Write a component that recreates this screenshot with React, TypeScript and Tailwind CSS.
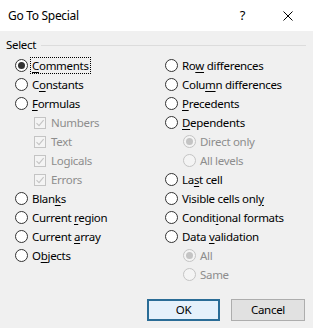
import React from 'react';

type Item = {
  label: string;
  u?: number;
  kind: 'radio' | 'check' | 'subradio';
  checked?: boolean;
  focus?: boolean;
};

const LEFT: Item[] = [
  { label: 'Comments', u: 0, kind: 'radio', checked: true, focus: true },
  { label: 'Constants', u: 1, kind: 'radio' },
  { label: 'Formulas', u: 0, kind: 'radio' },
  { label: 'Numbers', kind: 'check', checked: true },
  { label: 'Text', kind: 'check', checked: true },
  { label: 'Logicals', kind: 'check', checked: true },
  { label: 'Errors', kind: 'check', checked: true },
  { label: 'Blanks', u: 4, kind: 'radio' },
  { label: 'Current region', u: 8, kind: 'radio' },
  { label: 'Current array', u: 8, kind: 'radio' },
  { label: 'Objects', u: 1, kind: 'radio' },
];

const RIGHT: Item[] = [
  { label: 'Row differences', u: 2, kind: 'radio' },
  { label: 'Column differences', u: 4, kind: 'radio' },
  { label: 'Precedents', u: 0, kind: 'radio' },
  { label: 'Dependents', u: 0, kind: 'radio' },
  { label: 'Direct only', kind: 'subradio', checked: true },
  { label: 'All levels', kind: 'subradio' },
  { label: 'Last cell', u: 2, kind: 'radio' },
  { label: 'Visible cells only', u: 17, kind: 'radio' },
  { label: 'Conditional formats', u: 6, kind: 'radio' },
  { label: 'Data validation', u: 5, kind: 'radio' },
  { label: 'All', kind: 'subradio', checked: true },
  { label: 'Same', kind: 'subradio' },
];

function Label({ text, u }: { text: string; u?: number }) {
  if (u === undefined) return <>{text}</>;
  return (
    <>
      {text.slice(0, u)}
      <span className="underline underline-offset-2">{text[u]}</span>
      {text.slice(u + 1)}
    </>
  );
}

function Radio({ checked, disabled }: { checked?: boolean; disabled?: boolean }) {
  return (
    <span
      className={
        'w-[13px] h-[13px] rounded-full border flex items-center justify-center shrink-0 ' +
        (disabled ? 'border-[#c4c4c4] bg-[#f4f4f4]' : 'border-[#333] bg-white')
      }
    >
      {checked && (
        <span className={'w-[7px] h-[7px] rounded-full ' + (disabled ? 'bg-[#c4c4c4]' : 'bg-[#333]')} />
      )}
    </span>
  );
}

function Check() {
  return (
    <span className="w-[12px] h-[12px] border border-[#c4c4c4] bg-[#f4f4f4] flex items-center justify-center shrink-0">
      <svg width="10" height="10" viewBox="0 0 10 10">
        <path d="M1.5 5.2 L4 7.6 L8.6 2.2" fill="none" stroke="#c4c4c4" strokeWidth="1.1" />
      </svg>
    </span>
  );
}

function Row({ item }: { item: Item }) {
  if (item.kind === 'check') {
    return (
      <div className="h-[19px] flex items-center pl-[19px] gap-[5px] text-[#8d8d8d]">
        <Check />
        <span>{item.label}</span>
      </div>
    );
  }
  if (item.kind === 'subradio') {
    return (
      <div className="h-[19px] flex items-center pl-[18px] gap-[4px] text-[#8d8d8d]">
        <Radio checked={item.checked} disabled />
        <span>{item.label}</span>
      </div>
    );
  }
  return (
    <div className="h-[19px] flex items-center gap-[4px] text-black">
      <Radio checked={item.checked} />
      <span className={item.focus ? 'outline outline-1 outline-dotted outline-black px-[1px] -ml-[1px] leading-[15px]' : ''}>
        <Label text={item.label} u={item.u} />
      </span>
    </div>
  );
}

export default function App() {
  return (
    <div
      className="w-[313px] h-[328px] bg-[#f0f0f0] text-[11.5px] tracking-[-0.3px] text-black overflow-hidden"
      style={{ fontFamily: '"Noto Sans", "Open Sans", sans-serif' }}
    >
      <div className="h-[31px] bg-white flex items-center pl-[8px] pr-[20px]">
        <span className="text-[12px] flex-1">Go To Special</span>
        <span className="text-[13px] mr-[38px]">?</span>
        <svg width="10" height="10" viewBox="0 0 10 10">
          <path d="M0.5 0.5 L9.5 9.5 M9.5 0.5 L0.5 9.5" stroke="#000" strokeWidth="1" />
        </svg>
      </div>

      <div className="flex items-center pl-[6px] pr-[7px] pt-[6px] h-[21px]">
        <span>Select</span>
        <div className="flex-1 h-px bg-[#dcdcdc] ml-[5px] mt-[2px]" />
      </div>

      <div className="grid grid-cols-[150px_1fr] pl-[15px] pt-[4px]">
        <div className="flex flex-col">
          {LEFT.map((it) => (
            <Row key={it.label} item={it} />
          ))}
        </div>
        <div className="flex flex-col">
          {RIGHT.map((it) => (
            <Row key={it.label + it.kind} item={it} />
          ))}
        </div>
      </div>

      <div className="flex justify-end gap-[11px] pr-[8px] mt-[15px]">
        <button className="w-[73px] h-[22px] border-2 border-[#2a6c96] bg-[#e5f1fb] flex items-center justify-center">
          OK
        </button>
        <button className="w-[74px] h-[22px] border border-[#adadad] bg-[#e1e1e1] flex items-center justify-center">
          Cancel
        </button>
      </div>
    </div>
  );
}
